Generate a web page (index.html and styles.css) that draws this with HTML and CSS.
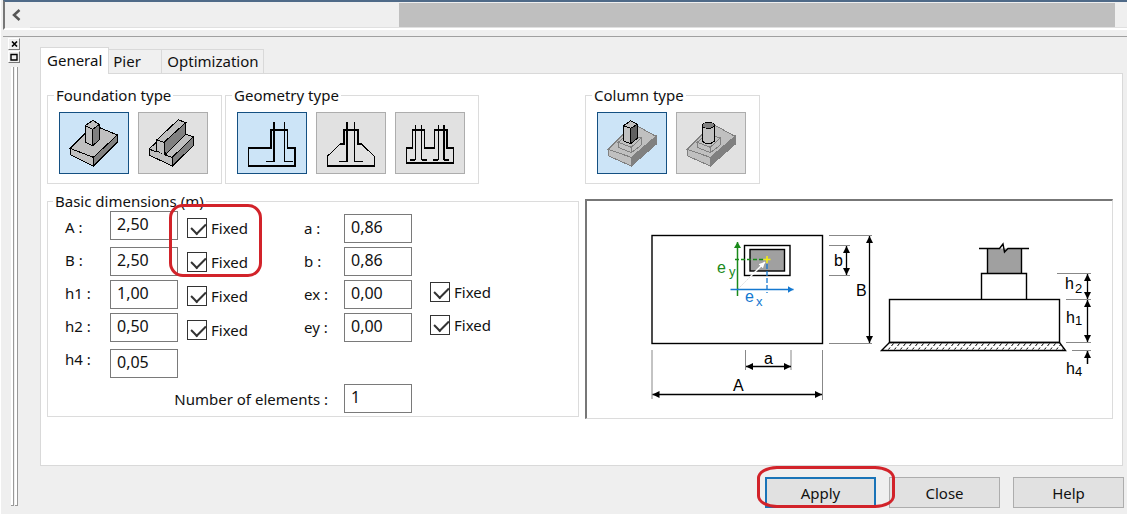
FILE: index.html
```
<!DOCTYPE html>
<html lang="en">
<head>
    <meta charset="UTF-8">
    <meta name="viewport" content="width=device-width, initial-scale=1.0">
    <title>Foundation geometry</title>
    <link rel="stylesheet" href="styles.css">
</head>
<body>
    <div class="scrollbar">
        <button type="button" class="scroll-left" aria-label="Scroll left">
            <svg width="10" height="12" viewBox="0 0 10 12"><path d="M8.500 1L3 6l5.500 5" fill="none" stroke="#555" stroke-width="2.500"/></svg>
        </button>
        <div class="track"><div class="thumb"></div></div>
    </div>

    <div class="dock">
        <div class="gripper">
            <button type="button" class="dock-btn" aria-label="Close panel">
                <svg width="7" height="6" viewBox="0 0 7 6"><path d="M1 0.500l5 5M6 0.500l-5 5" stroke="#000" stroke-width="1.600"/></svg>
            </button>
            <button type="button" class="dock-btn" aria-label="Maximize panel">
                <svg width="8" height="8" viewBox="0 0 8 8"><path d="M1 1.500h6v5.500h-6z" fill="none" stroke="#000" stroke-width="1.400"/></svg>
            </button>
            <div class="grip-lines"><span></span><span></span></div>
        </div>

        <form class="dialog">
            <div class="tabs" role="tablist">
                <button type="button" role="tab" class="tab active" aria-selected="true">General</button>
                <button type="button" role="tab" class="tab tab-pier" aria-selected="false">Pier</button>
                <button type="button" role="tab" class="tab" aria-selected="false">Optimization</button>
            </div>

            <div class="panel">
                <div class="groups">
                    <fieldset class="group">
                        <legend>Foundation type</legend>
                        <div class="choices">
                            <button type="button" class="choice selected" aria-label="Spread footing">
                                <svg viewBox="0 0 210 186" class="pixel solid">
                                    <path fill="#c0c0c0" d="M33 109L103 39L175 69L103 136z"/>
                                    <path fill="#c0c0c0" d="M33 109V127L103 162V136z"/>
                                    <path fill="#808080" d="M103 136V162L175 91V69z"/>
                                    <path fill="#c0c0c0" d="M79 41L101 25L121 37L101 52z"/>
                                    <path fill="#c0c0c0" d="M79 41V91L101 101V52z"/>
                                    <path fill="#808080" d="M101 52V101L121 84V37z"/>
                                </svg>
                            </button>
                            <button type="button" class="choice" aria-label="Continuous footing">
                                <svg viewBox="0 0 210 186" class="pixel solid">
                                    <path fill="#c0c0c0" d="M33 111L56 90V117L82 129L103 136V162L33 129z"/>
                                    <path fill="#c0c0c0" d="M82 129L143 67L166 74L103 136z"/>
                                    <path fill="#808080" d="M103 136V162L166 101V74z"/>
                                    <path fill="#808080" d="M78 91L143 32V67L82 129z"/>
                                    <path fill="#c0c0c0" d="M56 84L121 23L143 32L78 91z"/>
                                    <path fill="#c0c0c0" stroke="none" d="M56 84L78 91V129L56 114z"/>
                                    <path fill="none" d="M33 111L56 120V84L78 91V127"/>
                                </svg>
                            </button>
                        </div>
                    </fieldset>

                    <fieldset class="group">
                        <legend>Geometry type</legend>
                        <div class="choices">
                            <button type="button" class="choice selected" aria-label="Stepped footing">
                                <svg viewBox="0 0 210 186" class="pixel line">
                                    <path d="M34 107H102V53H151V107H174V162H34z"/>
                                    <path class="bar" d="M111 29V149"/>
                                    <path class="thin" d="M88 149H111M142 29V149H168"/>
                                </svg>
                            </button>
                            <button type="button" class="choice" aria-label="Sloped footing">
                                <svg viewBox="0 0 210 186" class="pixel line">
                                    <path d="M34 133V162H175V133M135 95H126V53H84V95H73"/>
                                    <path class="thin" d="M34 133L73 95M135 95L175 133"/>
                                    <path class="bar" d="M93 29V149"/>
                                    <path class="thin" d="M69 149H93M115 29V149H140"/>
                                </svg>
                            </button>
                            <button type="button" class="choice" aria-label="Double column footing">
                                <svg viewBox="0 0 210 186" class="pixel line">
                                    <path d="M34 107H52V53H88V107H118V53H156V107H175V153H34z"/>
                                    <path d="M45 143H61M80 143H96M115 143H130M147 143H162M130 39V143M147 39V143"/>
                                    <path class="thin" d="M61 39V143M80 39V143"/>
                                </svg>
                            </button>
                        </div>
                    </fieldset>
                </div>

                <div class="groups">
                    <fieldset class="group">
                        <legend>Column type</legend>
                        <div class="choices">
                            <button type="button" class="choice selected" aria-label="Rectangular column">
                                <svg viewBox="0 0 210 186" class="pixel solid">
                                    <g class="faded">
                                        <path d="M33 112L105 41H119L177 73L103 136z"/>
                                        <path d="M33 112V131L103 162V136z"/>
                                        <path fill="#808080" d="M103 136V162L177 97V73z"/>
                                        <path d="M64 91L90 68L133 77L103 106z"/>
                                        <path d="M64 91V106L103 122V106zM103 106V122L133 99V77z"/>
                                    </g>
                                    <path fill="#c0c0c0" d="M80 41L101 26L121 37L101 49z"/>
                                    <path fill="#c0c0c0" d="M80 41V87L101 95V49z"/>
                                    <path fill="#606060" d="M101 49V95L121 79V37z"/>
                                </svg>
                            </button>
                            <button type="button" class="choice" aria-label="Round column">
                                <svg viewBox="0 0 210 186" class="pixel solid">
                                    <g class="faded">
                                        <path d="M33 112L105 41H119L177 73L103 136z"/>
                                        <path d="M33 112V131L103 162V136z"/>
                                        <path fill="#808080" d="M103 136V162L177 97V73z"/>
                                        <path d="M64 91L90 68L133 77L103 106z"/>
                                        <path d="M64 91V106L103 122V106zM103 106V122L133 99V77z"/>
                                    </g>
                                    <path fill="#c0c0c0" d="M79 40V88Q97 102 115 88V40z"/>
                                    <ellipse cx="97" cy="40" rx="18" ry="9" fill="#808080"/>
                                </svg>
                            </button>
                        </div>
                    </fieldset>
                </div>

                <fieldset class="group dimensions">
                    <legend>Basic dimensions (m)</legend>
                    <div class="fields">
                        <div class="labels labels-left">
                            <label for="dimA">A :</label>
                            <label for="dimB">B :</label>
                            <label for="dimH1">h1 :</label>
                            <label for="dimH2">h2 :</label>
                            <label for="dimH4">h4 :</label>
                        </div>
                        <div class="inputs inputs-left">
                            <input type="text" id="dimA" value="2,50">
                            <input type="text" id="dimB" value="2,50">
                            <input type="text" id="dimH1" value="1,00">
                            <input type="text" id="dimH2" value="0,50">
                            <input type="text" id="dimH4" value="0,05">
                        </div>
                        <div class="checks checks-left">
                            <label><input type="checkbox" checked>Fixed</label>
                            <label><input type="checkbox" checked>Fixed</label>
                            <label><input type="checkbox" checked>Fixed</label>
                            <label><input type="checkbox" checked>Fixed</label>
                            <span class="mark mark-fixed"></span>
                        </div>
                        <div class="labels labels-right">
                            <label for="dimPa">a :</label>
                            <label for="dimPb">b :</label>
                            <label for="dimEx">ex :</label>
                            <label for="dimEy">ey :</label>
                        </div>
                        <div class="inputs inputs-right">
                            <input type="text" id="dimPa" value="0,86">
                            <input type="text" id="dimPb" value="0,86">
                            <input type="text" id="dimEx" value="0,00">
                            <input type="text" id="dimEy" value="0,00">
                        </div>
                        <div class="checks checks-right">
                            <label><input type="checkbox" checked>Fixed</label>
                            <label><input type="checkbox" checked>Fixed</label>
                        </div>
                    </div>
                    <div class="count">
                        <label for="elements">Number of elements :</label>
                        <input type="text" id="elements" value="1">
                    </div>
                </fieldset>

                <div class="drawing">
                    <svg width="524" height="216" viewBox="-1 0 524 216">
                        <defs>
                            <marker id="arrow" viewBox="0 0 7 7" refX="7" refY="3.500" markerWidth="7" markerHeight="7" markerUnits="userSpaceOnUse" orient="auto-start-reverse">
                                <path d="M0 0L7 3.500L0 7z"/>
                            </marker>
                            <marker id="arrowGreen" viewBox="0 0 6 7" refX="6" refY="3.500" markerWidth="6" markerHeight="7" markerUnits="userSpaceOnUse" orient="auto">
                                <path d="M0 0L6 3.500L0 7z" fill="#1a8a1a"/>
                            </marker>
                            <marker id="arrowBlue" viewBox="0 0 6 7" refX="6" refY="3.500" markerWidth="6" markerHeight="7" markerUnits="userSpaceOnUse" orient="auto">
                                <path d="M0 0L6 3.500L0 7z" fill="#1478d0"/>
                            </marker>
                            <marker id="arrowWhite" viewBox="0 0 6 6" refX="6" refY="3" markerWidth="6" markerHeight="6" markerUnits="userSpaceOnUse" orient="auto">
                                <path d="M0 0L6 3L0 6z" fill="#fff"/>
                            </marker>
                            <pattern id="hatch" width="6" height="9" patternUnits="userSpaceOnUse" y="141">
                                <path d="M0.500 7.500L2 5.500M3.500 4L5.500 1.500" stroke="#000"/>
                            </pattern>
                        </defs>

                        <!-- plan -->
                        <g class="outline">
                            <rect x="64" y="34.500" width="170.500" height="108"/>
                            <rect x="156.500" y="44.500" width="45.500" height="30"/>
                            <rect x="162" y="48.500" width="34.500" height="21.500" fill="#a0a0a0"/>
                        </g>
                        <path d="M150 88L164 74" stroke="#ddd" stroke-dasharray="2 1"/>
                        <path d="M162 76L177 61" stroke="#fff" stroke-width="1.500" marker-end="url(#arrowWhite)"/>
                        <path d="M149.500 95V41" stroke="#1a8a1a" stroke-width="1.500" marker-end="url(#arrowGreen)"/>
                        <path d="M147 58.500H175" stroke="#1a8a1a" stroke-width="1.300" stroke-dasharray="4 2"/>
                        <path d="M142.500 88.500H205.500" stroke="#1478d0" stroke-width="1.500" marker-end="url(#arrowBlue)"/>
                        <path d="M179 63V92" stroke="#1478d0" stroke-width="1.300" stroke-dasharray="5 2"/>
                        <path d="M175.500 58.500H182.500M179 55V62" stroke="#f4ee10" stroke-width="1.600"/>
                        <text x="129" y="72" class="green">e</text>
                        <text x="141" y="75" class="green sub">y</text>
                        <text x="157" y="101" class="blue">e</text>
                        <text x="168" y="105" class="blue sub">x</text>

                        <!-- section -->
                        <path d="M399.500 47.500H433.500V73H399.500z" fill="#a0a0a0"/>
                        <g class="outline">
                            <path d="M399.500 47.500V72.500M433.500 47.500V72.500M391 47.500H411.500L415 43L416.500 51L420 47.500H441"/>
                            <path d="M393.500 98.500V72.500H438.500V98.500"/>
                            <rect x="301.500" y="98.500" width="170" height="43"/>
                            <path d="M301.500 141.500L293.500 149.500H477.500L471.500 141.500z" fill="url(#hatch)"/>
                        </g>

                        <!-- dimension lines -->
                        <path class="extension" d="M241 34.500H284M241 142.500H284M241 44.500H262M241 74.500H262M157.500 149V169M203 149V169M64 149V198M234.500 149V199M469 72.500H503M478 98.500H503M478 141.500H503M484 149.500H503"/>
                        <g class="measure">
                            <path d="M281.500 35V142"/>
                            <path d="M258.500 45V74"/>
                            <path d="M158 165.500H203"/>
                            <path d="M64.500 193.500H234"/>
                            <path d="M499.500 73V98"/>
                            <path d="M499.500 99V141"/>
                        </g>
                        <path d="M499.500 163V150" stroke="#000" stroke-width="1.500" marker-end="url(#arrow)"/>
                        <text x="246" y="65">b</text>
                        <text x="268" y="95">B</text>
                        <text x="176" y="163">a</text>
                        <text x="145" y="190">A</text>
                        <text x="477" y="88">h</text>
                        <text x="487" y="92" class="sub">2</text>
                        <text x="478" y="122">h</text>
                        <text x="487" y="124" class="sub">1</text>
                        <text x="478" y="173">h</text>
                        <text x="487" y="175" class="sub">4</text>
                    </svg>
                </div>
            </div>

            <div class="actions">
                <div class="apply-wrap">
                    <button type="button" class="action default">Apply</button>
                    <span class="mark mark-apply"></span>
                </div>
                <button type="button" class="action">Close</button>
                <button type="button" class="action">Help</button>
            </div>
        </form>
    </div>
</body>
</html>
```
FILE: styles.css
```
* {
    box-sizing: border-box;
}

body {
    margin: 0;
    background: #efefef;
    border-left: 1px solid #fff;
    color: #111;
    font-family: "Noto Sans", "Open Sans", sans-serif;
    font-size: 15px;
    line-height: 18px;
}

button, input {
    font: inherit;
    color: inherit;
    margin: 0;
}

svg {
    display: block;
}

/* bottom edge of the view with its scrollbar */
.scrollbar {
    display: flex;
    height: 30px;
    margin-left: 2px;
    border-top: 2px solid #4f6a88;
    border-left: 2px solid #777;
    border-bottom: 2px solid #fff;
}

.scroll-left {
    width: 25px;
    padding: 0 0 0 6px;
    border: 0;
    background: none;
}

.track {
    flex: 1;
    padding: 1px 12px 1px 0;
    border-bottom: 1px solid #e0e0e0;
}

.thumb {
    width: 66%;
    height: 24px;
    margin-left: auto;
    background: #bfbfbf;
}

.dock {
    display: flex;
    margin: 6px 0 0 2px;
    border-top: 1px solid #a0a0a0;
}

.gripper {
    display: flex;
    flex-direction: column;
    align-items: center;
    gap: 1px;
    width: 37px;
    padding: 1px 19px 8px 4px;
}

.dock-btn {
    display: flex;
    align-items: center;
    justify-content: center;
    width: 12px;
    height: 12px;
    padding: 0;
    border: 1px solid;
    border-color: #fff #777 #777 #fff;
    background: #efefef;
}

.grip-lines {
    display: flex;
    flex: 1;
    gap: 1px;
    margin-top: 3px;
}

.grip-lines span {
    width: 3px;
    background: #fff;
    border-right: 1px solid #999;
    border-bottom: 1px solid #999;
}

.dialog {
    flex: 1;
    min-width: 0;
    padding: 10px 3px 6px 0;
}

.tabs {
    display: flex;
    align-items: flex-end;
}

.tab {
    height: 24px;
    padding: 0 4px 2px 5px;
    border: 1px solid #d9d9d9;
    border-left: 0;
    border-bottom: 0;
    background: #f0f0f0;
    white-space: nowrap;
}

.tab-pier {
    width: 53px;
    padding-left: 4px;
    text-align: left;
}

.tab.active {
    position: relative;
    height: 27px;
    margin-bottom: -1px;
    padding: 0 6px 2px;
    border-left: 1px solid #d9d9d9;
    background: #fff;
}

.panel {
    display: grid;
    grid-template-columns: 532px 1fr;
    gap: 8px 6px;
    margin-right: 1px;
    padding: 12px 9px 48px 6px;
    border: 1px solid #d9d9d9;
    background: #fff;
}

.groups {
    display: flex;
    gap: 3px;
}

.group {
    min-width: 0;
    margin: 0;
    padding: 8px 13px 9px 11px;
    border: 1px solid #dcdcdc;
}

.group legend {
    margin-left: -5px;
    padding: 0 2px;
}

.choices {
    display: flex;
    gap: 9px;
}

.choice {
    width: 70px;
    height: 62px;
    padding: 0;
    border: 1px solid #adadad;
    background: #e1e1e1;
}

.choice.selected {
    border-color: #145082;
    background: #cce4f7;
}

.choice svg {
    width: 70px;
    height: 62px;
    margin: -1px;
}

.pixel {
    shape-rendering: crispEdges;
}

.solid {
    stroke: #000;
    stroke-width: 3;
}

.faded {
    fill: #c0c0c0;
    stroke: #808080;
}

.line {
    fill: none;
    stroke: #000;
    stroke-width: 5;
}

.line .thin {
    stroke-width: 3;
}

.line .bar {
    stroke-width: 6;
}

/* basic dimensions */
.dimensions {
    padding: 1px 0 3px 17px;
}

.dimensions legend {
    margin-left: -12px;
}

.fields {
    display: flex;
    align-items: flex-start;
}

.labels, .checks {
    display: grid;
}

.labels label {
    align-self: center;
}

.labels-left {
    grid-auto-rows: 33px;
    width: 45px;
    margin-top: -1px;
}

.labels-right {
    grid-auto-rows: 33px;
    width: 40px;
}

.inputs {
    display: grid;
    width: 68px;
}

.inputs-left {
    grid-template-rows: 36px 33px 33px 36px 29px;
}

.inputs-right {
    grid-auto-rows: 33px;
    padding-top: 3px;
}

.inputs input, .count input {
    width: 68px;
    height: 29px;
    padding: 0 6px 4px;
    border: 1px solid #7a7a7a;
    background: #fff;
    font-size: 16px;
}

.checks {
    position: relative;
    grid-auto-rows: 34px;
}

.checks label {
    display: flex;
    align-items: center;
    gap: 4px;
    height: 20px;
}

.checks-left {
    width: 117px;
    margin-left: 9px;
    padding-top: 7px;
}

.checks-right {
    grid-auto-rows: 33px;
    margin-left: 18px;
    padding-top: 71px;
}

input[type="checkbox"] {
    appearance: none;
    width: 20px;
    height: 20px;
    border: 1px solid #333;
    background: #fff;
}

input[type="checkbox"]:checked::before {
    content: "";
    display: block;
    width: 7px;
    height: 12px;
    margin: 1px 0 0 6px;
    border: solid #333;
    border-width: 0 2px 2px 0;
    transform: rotate(45deg);
}

.count {
    display: flex;
    align-items: center;
    justify-content: flex-end;
    gap: 16px;
    width: 347px;
    margin-top: 6px;
}

/* red highlight marks */
.mark {
    position: absolute;
    border: 3px solid #d2232a;
    pointer-events: none;
}

.mark-fixed {
    top: -7px;
    left: -18px;
    width: 93px;
    height: 73px;
    border-radius: 14px;
}

.drawing {
    margin: 7px 0 -2px 0;
    border: 1px solid #dcdcdc;
    border-top: 2px solid #777;
    border-left: 2px solid #777;
    background: #fff;
    overflow: hidden;
}

.outline {
    fill: none;
    stroke: #000;
    stroke-width: 1.4;
}

.extension {
    stroke: #888;
}

.measure {
    stroke: #000;
    stroke-width: 1.3;
}

.measure path {
    marker-start: url(#arrow);
    marker-end: url(#arrow);
}

.drawing text {
    font-family: "Liberation Sans", Arial, sans-serif;
    font-size: 16px;
}

.drawing .sub {
    font-size: 13px;
}

.drawing .green {
    fill: #1a8a1a;
}

.drawing .blue {
    fill: #1478d0;
}

.actions {
    display: flex;
    justify-content: flex-end;
    gap: 13px;
    margin-top: 11px;
}

.apply-wrap {
    position: relative;
}

.action {
    width: 111px;
    height: 31px;
    padding: 0;
    border: 1px solid #adadad;
    background: #e1e1e1;
}

.action.default {
    border: 2px solid #1a74b8;
}

.mark-apply {
    top: -11px;
    left: -8px;
    width: 138px;
    height: 42px;
    border-radius: 20px / 12px;
}
```
